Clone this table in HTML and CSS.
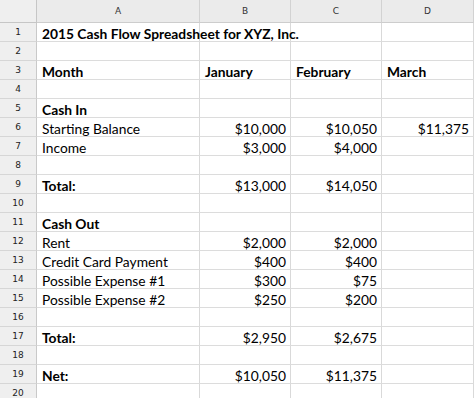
FILE: index.html
```html
<!DOCTYPE html>
<html>
<head>
<meta charset="utf-8">
<link rel="stylesheet" href="styles.css">
</head>
<body>
<div class="sheet">
  <div class="corner"></div><div class="colhead">A</div><div class="colhead">B</div><div class="colhead">C</div><div class="colhead">D</div>

  <div class="rownum">1</div><div class="cell b title">2015 Cash Flow Spreadsheet for XYZ, Inc.</div><div class="cell"></div><div class="cell"></div><div class="cell"></div>
  <div class="rownum">2</div><div class="cell"></div><div class="cell"></div><div class="cell"></div><div class="cell"></div>
  <div class="rownum">3</div><div class="cell b">Month</div><div class="cell b">January</div><div class="cell b">February</div><div class="cell b">March</div>
  <div class="rownum">4</div><div class="cell"></div><div class="cell"></div><div class="cell"></div><div class="cell"></div>
  <div class="rownum">5</div><div class="cell b">Cash In</div><div class="cell"></div><div class="cell"></div><div class="cell"></div>
  <div class="rownum">6</div><div class="cell">Starting Balance</div><div class="cell r">$10,000</div><div class="cell r">$10,050</div><div class="cell r">$11,375</div>
  <div class="rownum">7</div><div class="cell">Income</div><div class="cell r">$3,000</div><div class="cell r">$4,000</div><div class="cell"></div>
  <div class="rownum">8</div><div class="cell"></div><div class="cell"></div><div class="cell"></div><div class="cell"></div>
  <div class="rownum">9</div><div class="cell b">Total:</div><div class="cell r">$13,000</div><div class="cell r">$14,050</div><div class="cell"></div>
  <div class="rownum">10</div><div class="cell"></div><div class="cell"></div><div class="cell"></div><div class="cell"></div>
  <div class="rownum">11</div><div class="cell b">Cash Out</div><div class="cell"></div><div class="cell"></div><div class="cell"></div>
  <div class="rownum">12</div><div class="cell">Rent</div><div class="cell r">$2,000</div><div class="cell r">$2,000</div><div class="cell"></div>
  <div class="rownum">13</div><div class="cell">Credit Card Payment</div><div class="cell r">$400</div><div class="cell r">$400</div><div class="cell"></div>
  <div class="rownum">14</div><div class="cell">Possible Expense #1</div><div class="cell r">$300</div><div class="cell r">$75</div><div class="cell"></div>
  <div class="rownum">15</div><div class="cell">Possible Expense #2</div><div class="cell r">$250</div><div class="cell r">$200</div><div class="cell"></div>
  <div class="rownum">16</div><div class="cell"></div><div class="cell"></div><div class="cell"></div><div class="cell"></div>
  <div class="rownum">17</div><div class="cell b">Total:</div><div class="cell r">$2,950</div><div class="cell r">$2,675</div><div class="cell"></div>
  <div class="rownum">18</div><div class="cell"></div><div class="cell"></div><div class="cell"></div><div class="cell"></div>
  <div class="rownum">19</div><div class="cell b">Net:</div><div class="cell r">$10,050</div><div class="cell r">$11,375</div><div class="cell"></div>
  <div class="rownum">20</div><div class="cell"></div><div class="cell"></div><div class="cell"></div><div class="cell"></div>
</div>
</body>
</html>
```
FILE: styles.css
```css
html, body {
  margin: 0;
  padding: 0;
  background: #ffffff;
  overflow: hidden;
}
.sheet {
  display: grid;
  grid-template-columns: 37px 163px 91px 91px 92px;
  grid-template-rows: 23px repeat(20, 19px);
  width: 474px;
  height: 398px;
  overflow: hidden;
  font-family: Lato, "Open Sans", sans-serif;
  font-size: 13.8px;
  color: #000;
}
.sheet > div {
  box-sizing: border-box;
  border-right: 1px solid #d9d9d9;
  border-bottom: 1px solid #dcdcdc;
  white-space: nowrap;
}
.corner {
  background: #efefef;
  border-right: 1px solid #c6c6c6 !important;
  border-bottom: 1px solid #c6c6c6 !important;
}
.colhead {
  background: #ebebeb;
  border-bottom: 1px solid #cdcdcd !important;
  border-right: 1px solid #d2d2d2 !important;
  font-family: "DejaVu Sans", sans-serif;
  font-size: 9px;
  color: #333;
  text-align: center;
  line-height: 23px;
}
.rownum {
  background: #efefef;
  border-right: 1px solid #c9c9c9 !important;
  border-bottom: 1px solid #d6d6d6 !important;
  font-family: "DejaVu Sans", sans-serif;
  font-size: 9px;
  color: #222;
  text-align: center;
  line-height: 19px;
}
.cell {
  line-height: 19px;
  padding: 1px 4px 0 5px;
  overflow: visible;
}
.cell.b {
  font-weight: bold;
}
.cell.r {
  text-align: right;
}
.cell.title {
  position: relative;
  z-index: 1;
}
```
